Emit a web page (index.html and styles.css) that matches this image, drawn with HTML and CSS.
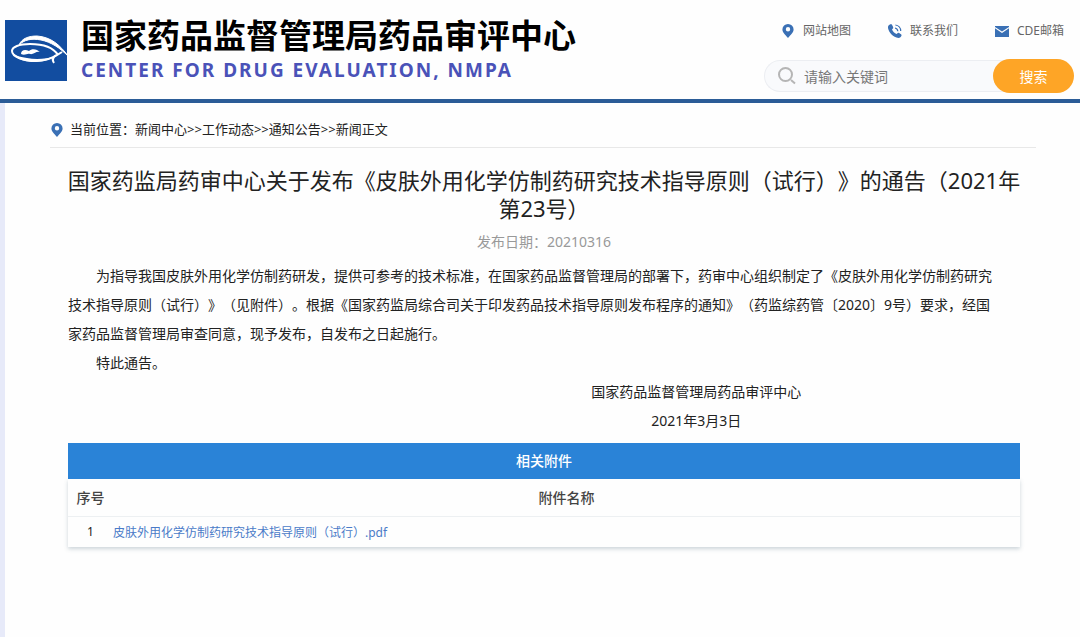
FILE: index.html
```html
<!DOCTYPE html>
<html lang="zh-CN">
  <head>
    <meta charset="UTF-8" />
    <meta name="viewport" content="width=device-width, initial-scale=1.0" />
    <title>国家药品监督管理局药品审评中心</title>
    <link rel="stylesheet" href="styles.css" />
  </head>
  <body>
    <header class="header">
      <div class="brand">
        <svg class="logo" viewBox="0 0 64 61" aria-hidden="true">
          <rect width="62" height="61" fill="#124da0" />
          <path
            d="M14 25 C17 18 24 16 32 16 C46 17 55 25 63 36 C55 28 46 22 36 20 C26 18 19 20 14 25 Z"
            fill="#fff"
            stroke="#fff"
            stroke-width="1"
          />
          <path
            d="M53 35 C48 27 37 24 25 24 C14 24 7 27 7 31 C7 37 19 41 31 41 C42 41 50 37 57 32"
            fill="none"
            stroke="#fff"
            stroke-width="2"
          />
          <path d="M7 31 C7 37 17 42 30 42 C39 42 46 39 51 36 C42 39 31 40 22 38 C14 37 9 35 7 31 Z" fill="#fff" />
          <path d="M51 35 C48 37 47 40 49 43" fill="none" stroke="#fff" stroke-width="2" />
          <path
            d="M16 34 C16 30 20 29 24 31 C27 28 32 29 35 32 C31 31 28 35 25 34 C22 33 20 36 16 34 Z"
            fill="#fff"
          />
        </svg>
        <div class="brand-text">
          <h1 class="site-name">国家药品监督管理局药品审评中心</h1>
          <p class="site-name-en">CENTER FOR DRUG EVALUATION, NMPA</p>
        </div>
      </div>

      <div class="tools">
        <nav class="quick-links">
          <a href="#">
            <svg class="icon" viewBox="0 0 14 14" aria-hidden="true">
              <path
                fill-rule="evenodd"
                d="M7 0 A5.6 5.6 0 0 0 1.4 5.5 C1.4 8.5 4 10.5 7 14 C10 10.5 12.6 8.5 12.6 5.5 A5.6 5.6 0 0 0 7 0 Z M7 3 A2.2 2.2 0 1 1 7 7.4 A2.2 2.2 0 0 1 7 3 Z"
              />
            </svg>
            网站地图
          </a>
          <a href="#">
            <svg class="icon" viewBox="0 0 14 14" aria-hidden="true">
              <path
                d="M1 1 L3 0 C4 0 5.3 3 5.3 4 L4 5.5 C5 7.7 6.3 9 8.7 10 L10 8.8 C11 8.8 13.6 10.4 13.6 11.2 C13 13 12 14 10.5 14 C5 13 1 9 0 4 C0 2.5 0 2 1 1 Z"
              />
              <path
                d="M7 4 A3.5 3.5 0 0 1 9.8 7.2 M7.4 1 A6 6 0 0 1 12.7 7"
                fill="none"
                stroke="#3a70b5"
                stroke-width="1.2"
              />
            </svg>
            联系我们
          </a>
          <a href="#">
            <svg class="icon" viewBox="0 0 14 14" aria-hidden="true">
              <path d="M0 2 H14 V3 L7 7.5 L0 3 Z M0 4.3 L7 9 L14 4.3 V13 H0 Z" />
            </svg>
            CDE邮箱
          </a>
        </nav>
        <form class="search">
          <label class="search-label" for="keyword">
            <svg class="search-icon" viewBox="0 0 18 18" role="img" aria-label="搜索关键词">
              <circle cx="7.5" cy="7.5" r="6.5" />
              <path d="M13 13 L17 16.5" />
            </svg>
          </label>
          <input class="search-input" type="text" id="keyword" placeholder="请输入关键词" />
          <button class="search-btn" type="submit">搜索</button>
        </form>
      </div>
    </header>

    <main class="main">
      <nav class="breadcrumb">
        <svg class="icon" viewBox="0 0 14 14" aria-hidden="true">
          <path
            fill-rule="evenodd"
            d="M7 0 A5.6 5.6 0 0 0 1.4 5.5 C1.4 8.5 4 10.5 7 14 C10 10.5 12.6 8.5 12.6 5.5 A5.6 5.6 0 0 0 7 0 Z M7 3 A2.2 2.2 0 1 1 7 7.4 A2.2 2.2 0 0 1 7 3 Z"
          />
        </svg>
        <span>当前位置：<a href="#">新闻中心</a>&gt;&gt;<a href="#">工作动态</a>&gt;&gt;<a href="#">通知公告</a>&gt;&gt;<a href="#">新闻正文</a></span>
      </nav>

      <article class="article">
        <h2 class="article-title">国家药监局药审中心关于发布《皮肤外用化学仿制药研究技术指导原则（试行）》的通告（2021年第23号）</h2>
        <p class="article-date">发布日期：20210316</p>

        <div class="article-body">
          <p class="paragraph">为指导我国皮肤外用化学仿制药研发，提供可参考的技术标准，在国家药品监督管理局的部署下，药审中心组织制定了《皮肤外用化学仿制药研究技术指导原则（试行）》（见附件）。根据《国家药监局综合司关于印发药品技术指导原则发布程序的通知》（药监综药管〔2020〕9号）要求，经国家药品监督管理局审查同意，现予发布，自发布之日起施行。</p>
          <p class="paragraph">特此通告。</p>
          <div class="signature">
            <p>国家药品监督管理局药品审评中心</p>
            <p>2021年3月3日</p>
          </div>
        </div>

        <table class="attachments">
          <caption>相关附件</caption>
          <thead>
            <tr>
              <th class="col-no">序号</th>
              <th>附件名称</th>
            </tr>
          </thead>
          <tbody>
            <tr>
              <td class="col-no">1</td>
              <td><a href="#">皮肤外用化学仿制药研究技术指导原则（试行）.pdf</a></td>
            </tr>
          </tbody>
        </table>
      </article>
    </main>
  </body>
</html>
```

FILE: styles.css
```css
* {
  margin: 0;
  padding: 0;
  box-sizing: border-box;
}

body {
  display: flex;
  flex-direction: column;
  min-height: 100vh;
  font-family: "Noto Sans", "Noto Sans CJK SC", sans-serif;
  font-size: 14px;
  color: #222;
  background: #fefefe;
  text-spacing-trim: space-all;
}

a {
  color: inherit;
  text-decoration: none;
}

.icon {
  width: 14px;
  height: 14px;
  fill: #3a70b5;
  flex: none;
}

/* header */
.header {
  display: flex;
  justify-content: space-between;
  padding: 16px 6px 6px 5px;
  border-bottom: 4px solid #2b5c97;
}

.brand {
  display: flex;
  align-items: flex-start;
  gap: 12px;
}

.logo {
  width: 64px;
  height: 61px;
  margin-top: 4px;
}

.site-name {
  font-size: 33px;
  line-height: 40px;
  font-weight: bold;
  color: #000;
}

.site-name-en {
  font-size: 19px;
  line-height: 28px;
  font-weight: bold;
  letter-spacing: 2px;
  color: #4a52b8;
}

.tools {
  width: 310px;
  padding-top: 5px;
}

.quick-links {
  display: flex;
  justify-content: space-between;
  padding: 0 10px 0 17px;
  font-size: 12px;
  line-height: 20px;
  color: #666;
}

.quick-links a {
  display: flex;
  align-items: center;
  gap: 8px;
}

.search {
  display: flex;
  align-items: center;
  margin-top: 18px;
  height: 34px;
}

.search-label {
  display: flex;
  align-items: center;
  height: 32px;
  padding: 0 8px 0 13px;
  border: 1px solid #eceef2;
  border-right: none;
  border-radius: 16px 0 0 16px;
  background: #f9fafc;
}

.search-icon {
  width: 18px;
  height: 18px;
  fill: none;
  stroke: #b5b5b5;
  stroke-width: 2;
}

.search-input {
  flex: 1;
  min-width: 0;
  height: 32px;
  margin-right: -17px;
  border: 1px solid #eceef2;
  border-width: 1px 0;
  background: #f9fafc;
  font-family: inherit;
  font-size: 14px;
  outline: none;
}

.search-input::placeholder {
  color: #777;
}

.search-btn {
  width: 81px;
  height: 34px;
  border: none;
  border-radius: 17px;
  background: #fea526;
  color: #fff;
  font-family: inherit;
  font-size: 14px;
  cursor: pointer;
}

/* content */
.main {
  flex: 1;
  padding: 10px 44px 40px 45px;
  border-left: 5px solid #e7eaf9;
}

.breadcrumb {
  display: flex;
  align-items: center;
  gap: 6px;
  padding: 6px 0 7px;
  border-bottom: 1px solid #e8e8e8;
  font-size: 13px;
  line-height: 21px;
}

.article {
  padding: 18px 16px 0 18px;
}

.article-title {
  margin: 0 -10px;
  font-size: 22px;
  line-height: 28px;
  font-weight: normal;
  text-align: center;
}

.article-date {
  margin: 10px 0 9px;
  line-height: 20px;
  text-align: center;
  color: #999;
}

.article-body {
  line-height: 29px;
}

.paragraph {
  max-width: 66em;
  text-indent: 2em;
}

.signature {
  width: 68%;
  margin-left: auto;
  text-align: center;
}

/* attachments */
.attachments {
  width: 100%;
  margin-top: 8px;
  border-collapse: collapse;
  box-shadow: 0 2px 4px rgba(60, 90, 110, 0.25);
}

.attachments caption {
  background: #2a83d7;
  color: #fff;
  font-weight: 500;
  line-height: 36px;
}

.attachments th {
  height: 37px;
  border-bottom: 1px solid #edf0f2;
  font-weight: 500;
  color: #444;
}

.attachments td {
  height: 31px;
  font-size: 12px;
}

.attachments .col-no {
  width: 45px;
  text-align: center;
}

.attachments td a {
  color: #4a7bc8;
}
```
